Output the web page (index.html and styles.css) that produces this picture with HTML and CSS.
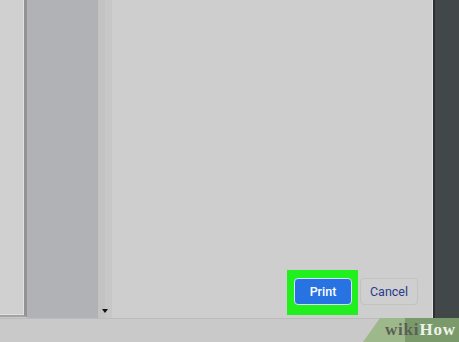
FILE: index.html
```html
<!DOCTYPE html>
<html>
<head>
<meta charset="utf-8">
<link rel="stylesheet" href="styles.css">
</head>
<body>
<div class="screen">
  <div class="top">
    <div class="page"></div>
    <div class="thumbs"></div>
    <div class="scroll"><span class="arrow"></span></div>
    <div class="main">
      <div class="actions">
        <div class="highlight"><button class="btn print">Print</button></div>
        <button class="btn cancel">Cancel</button>
      </div>
    </div>
    <div class="dark"></div>
  </div>
  <div class="bottom"></div>
  <div class="watermark">
    <svg class="wm-bg" width="96" height="24" viewBox="0 0 96 24">
      <polygon points="17,0 42,0 42,24 0,24" fill="#9db98b"/>
      <rect x="42" y="0" width="54" height="24" fill="#7b9a6b"/>
    </svg>
    <span class="wm-text"><span class="wiki">wiki</span><span class="how">How</span></span>
  </div>
</div>
</body>
</html>
```

FILE: styles.css
```css
* { box-sizing: border-box; }
html, body { margin: 0; padding: 0; }
body { background: #c9c9c9; font-family: Roboto, "Liberation Sans", Arial, sans-serif; }
.screen { position: relative; width: 459px; height: 342px; overflow: hidden; }
.top { display: flex; height: 319px; border-bottom: 1px solid #bcbcbc; }
.page { width: 27px; height: 317px; background: #d0d0d0; border-right: 3px solid #939393; border-bottom: 2px solid #a3a3a3; box-shadow: inset -1px -1px 0 #e0e0e0; }
.thumbs { width: 71px; background: #b1b2b6; }
.scroll { width: 14px; position: relative; background: linear-gradient(to right, #c3c3c3 0, #c3c3c3 7px, #c7c7c7 7px); }
.arrow { position: absolute; left: 4px; bottom: 5px; width: 0; height: 0; border-left: 3px solid transparent; border-right: 3px solid transparent; border-top: 4px solid #111; }
.main { flex: 1; background: #cecece; display: flex; flex-direction: column; justify-content: flex-end; padding: 0 14px 3px 175px; }
.actions { display: flex; align-items: flex-start; gap: 2px; }
.highlight { background: #22f01e; padding: 8px 6px 10px 7px; }
.btn { font-family: Roboto, "Liberation Sans", Arial, sans-serif; font-size: 12.5px; height: 27px; border-radius: 4px; cursor: pointer; margin: 0; padding: 0; }
.print { width: 58px; background: #2773e2; color: #fff; font-weight: 500; border: 1px solid #d8e4f5; }
.cancel { width: 58px; margin-top: 8px; background: #cfcfcf; color: #2a3a8e; border: 1px solid #c2c2c2; }
.dark { width: 27px; background: #42474a; border-left: 1px solid #e0e0e0; box-shadow: inset 2px 0 0 #2d3032; }
.bottom { height: 22px; background: #c9c9c9; }
.watermark { position: absolute; right: 0; bottom: 0; width: 96px; height: 24px; }
.wm-bg { position: absolute; left: 0; top: 0; display: block; }
.wm-text { position: absolute; left: 22px; top: 3px; font-family: "Liberation Serif", "Times New Roman", serif; font-weight: bold; font-size: 17px; line-height: 18px; letter-spacing: 0.8px; }
.wiki { color: #5b5f57; }
.how { color: #eef3ea; }
```
